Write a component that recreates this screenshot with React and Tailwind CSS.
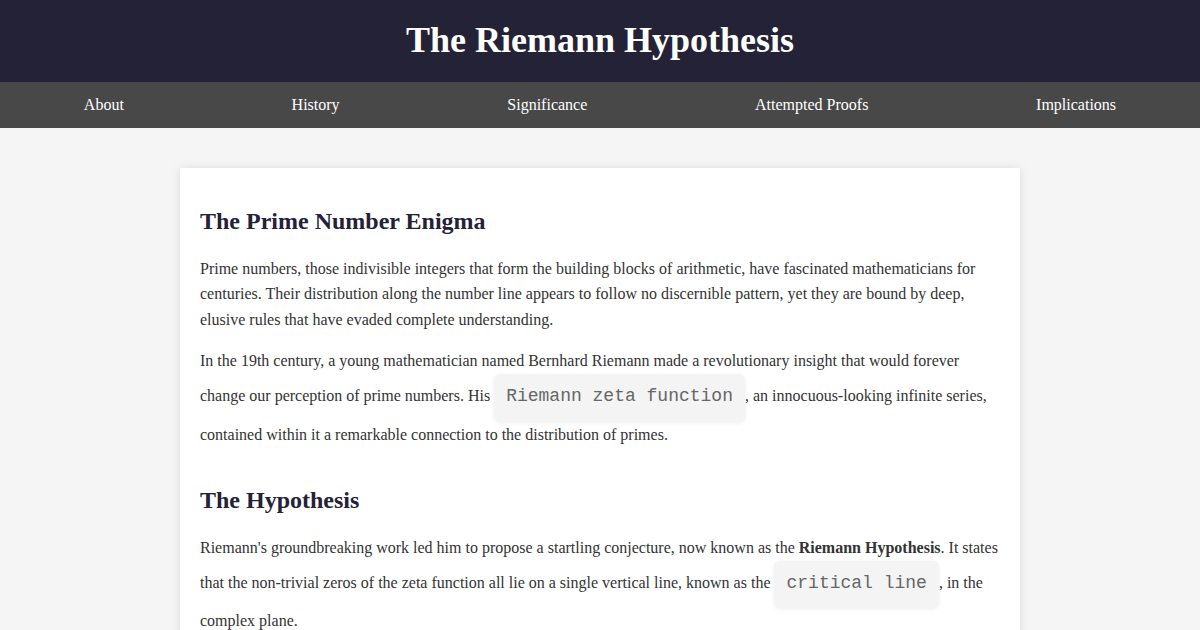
export default function App() {
  const code =
    "inline-block font-['Liberation_Mono','Courier_New',monospace] text-[18px] leading-[1.6] text-[#666] bg-[#f4f4f4] rounded-md px-3 pt-[8px] pb-[11px] shadow-[0_1px_4px_rgba(0,0,0,0.07)]";
  return (
    <div className="min-h-screen bg-[#f5f5f5] font-['Liberation_Serif',serif]">
      <header className="bg-[#242237] h-[82px] flex items-center justify-center">
        <h1 className="text-[36px] leading-[1.15] font-bold text-white">The Riemann Hypothesis</h1>
      </header>
      <nav className="bg-[#484848] flex justify-around h-[46px] items-center text-white text-[16px]">
        <a>About</a>
        <a>History</a>
        <a>Significance</a>
        <a>Attempted Proofs</a>
        <a>Implications</a>
      </nav>
      <main className="max-w-[840px] mx-auto mt-10 bg-white p-5 shadow-[0_0_10px_rgba(0,0,0,0.1)]">
        <section className="mb-10">
          <h2 className="text-[24px] leading-[1.15] font-bold text-[#242237] my-[20px]">The Prime Number Enigma</h2>
          <p className="text-[16px] leading-[1.6] text-[#333] mb-4">
            Prime numbers, those indivisible integers that form the building blocks of arithmetic, have fascinated mathematicians for centuries. Their distribution along the number line appears to follow no discernible pattern, yet they are bound by deep, elusive rules that have evaded complete understanding.
          </p>
          <p className="text-[16px] leading-[1.6] text-[#333]">
            In the 19th century, a young mathematician named Bernhard Riemann made a revolutionary insight that would forever change our perception of prime numbers. His <code className={code}>Riemann zeta function</code>, an innocuous-looking infinite series, contained within it a remarkable connection to the distribution of primes.
          </p>
        </section>
        <section>
          <h2 className="text-[24px] leading-[1.15] font-bold text-[#242237] my-[20px]">The Hypothesis</h2>
          <p className="text-[16px] leading-[1.6] text-[#333] mb-4">
            Riemann's groundbreaking work led him to propose a startling conjecture, now known as the <strong>Riemann Hypothesis</strong>. It states that the non-trivial zeros of the zeta function all lie on a single vertical line, known as the <code className={code}>critical line</code>, in the complex plane.
          </p>
          <p className="text-[16px] leading-[1.6] text-[#333]">
            Despite its apparent simplicity, the hypothesis has resisted proof for more than a century and a half, standing today as one of the most important unsolved problems in all of mathematics.
          </p>
        </section>
      </main>
    </div>
  );
}
